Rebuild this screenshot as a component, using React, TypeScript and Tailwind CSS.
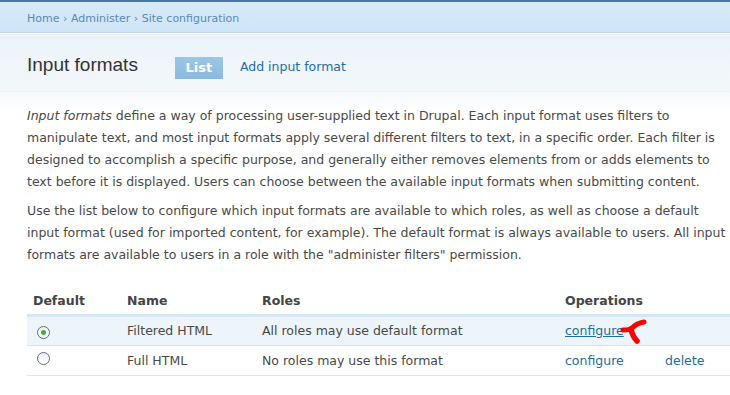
import * as React from 'react';

type Format = {
  name: string
  roles: string
  isDefault: boolean
  canDelete: boolean
};

const formats: Format[] = [
  {name: 'Filtered HTML', roles: 'All roles may use default format', isDefault: true, canDelete: false},
  {name: 'Full HTML', roles: 'No roles may use this format', isDefault: false, canDelete: true},
];

function Radio({checked}: { checked: boolean }) {
  return (
    <span
      className="inline-flex items-center justify-center w-[13px] h-[13px] rounded-full border border-[#5a6d8a] bg-gradient-to-b from-[#f0f0f0] to-white">
      {checked && <span className="w-[5px] h-[5px] rounded-full bg-[#3fae3a]"/>}
    </span>
  );
}

function RedMark() {
  return (
    <svg className="absolute left-[619px] top-[316px] pointer-events-none" width="30" height="30" viewBox="0 0 30 30">
      <path d="M4 14 C8 14 11 14 13 12 C16 9 19 7 25 6" fill="none" stroke="#ff0000" strokeWidth="5"
            strokeLinecap="round"/>
      <path d="M12 13 C13 18 15 22 18 25" fill="none" stroke="#ff0000" strokeWidth="5.5" strokeLinecap="round"/>
    </svg>
  );
}

export default function App() {
  return (
    <div className="relative w-[730px] h-[395px] overflow-hidden bg-white text-[#494949]"
         style={{fontFamily: '"DejaVu Sans", Verdana, sans-serif'}}>
      {/* breadcrumb bar */}
      <div className="border-t-2 border-[#4a78a6] h-[33px] bg-gradient-to-b from-[#d7eaf6] to-[#cfe5f8] border-b border-b-[#c2d8ea] flex items-center pl-[27px]">
        <span className="text-[11px] text-[#5a8ab0] mt-[4px]">
          Home › Administer › Site configuration
        </span>
      </div>

      {/* header */}
      <div className="h-[59px] border-t border-white bg-gradient-to-b from-[#ebf3f9] to-[#f4f8fb] border-b border-b-[#eef3f7] flex items-center pl-[27px]">
        <h2 className="text-[19px] text-[#333] mr-[37px] mt-[5px]" style={{fontFamily: '"Liberation Sans", Arial, sans-serif'}}>
          Input formats
        </h2>
        <span className="w-[48px] h-[22px] mt-[10px] flex items-center justify-center bg-gradient-to-b from-[#9cc6e6] to-[#8ab9df] text-white font-bold text-[13px]">
          List
        </span>
        <a className="ml-[17px] mt-[10px] text-[12.5px] text-[#1c6ea0]">Add input format</a>
      </div>

      {/* content */}
      <div className="bg-gradient-to-b from-[#f6f9fc] to-white to-[20px] px-[27px] pt-[13px] text-[12.5px] leading-[22px] whitespace-nowrap">
        <p>
          <em>Input formats</em> define a way of processing user-supplied text in Drupal. Each input format uses filters to<br/>
          manipulate text, and most input formats apply several different filters to text, in a specific order. Each filter is<br/>
          designed to accomplish a specific purpose, and generally either removes elements from or adds elements to<br/>
          text before it is displayed. Users can choose between the available input formats when submitting content.
        </p>
        <p className="mt-[7px]">
          Use the list below to configure which input formats are available to which roles, as well as choose a default<br/>
          input format (used for imported content, for example). The default format is always available to users. All input<br/>
          formats are available to users in a role with the "administer filters" permission.
        </p>

        <table className="mt-[24px] w-[710px] border-collapse text-left">
          <thead>
          <tr className="border-b-[3px] border-[#d3e7f4] text-[#444]">
            <th className="w-[94px] pl-[6px] pb-[2px] font-bold">Default</th>
            <th className="w-[135px] pl-[6px] pb-[2px] font-bold">Name</th>
            <th className="w-[303px] pl-[6px] pb-[2px] font-bold">Roles</th>
            <th className="w-[100px] pl-[6px] pb-[2px] font-bold">Operations</th>
            <th className="pb-[2px]"></th>
          </tr>
          </thead>
          <tbody>
          {formats.map(f => (
            <tr key={f.name} className={(f.isDefault ? 'bg-[#edf5fa] border-[#d3e7f4]' : 'bg-white border-[#e2e2e2]') + ' border-b h-[30px]'}>
              <td className="pl-[10px]"><Radio checked={f.isDefault}/></td>
              <td className="pl-[6px]">{f.name}</td>
              <td className="pl-[6px]">{f.roles}</td>
              <td className="pl-[6px]">
                <a className={'text-[#1c6ea0] ' + (f.isDefault ? 'underline' : '')}>configure</a>
              </td>
              <td className="pl-[6px]">
                {f.canDelete && <a className="text-[#1c6ea0]">delete</a>}
              </td>
            </tr>
          ))}
          </tbody>
        </table>
      </div>

      <RedMark/>
    </div>
  );
}
